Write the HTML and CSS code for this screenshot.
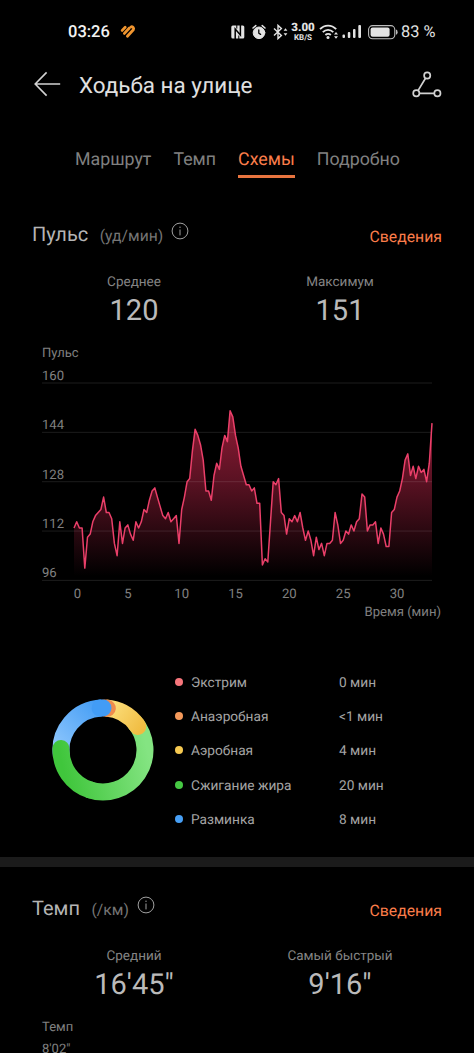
FILE: index.html
```html
<!DOCTYPE html>
<html lang="ru">
<head>
    <meta charset="UTF-8">
    <meta name="viewport" content="width=device-width, initial-scale=1.0">
    <title>Ходьба на улице</title>
    <link rel="stylesheet" href="styles.css">
</head>
<body>
    <div class="status-bar">
        <span class="clock">03:26</span>
        <svg class="heart" width="16" height="14" viewBox="0 0 16 14" fill="none" stroke="#f0952f" stroke-width="2.8" stroke-linecap="round">
            <path d="M2.2 5.4 L5.2 2.3"/>
            <path d="M4.4 8.4 L9.4 3"/>
            <path d="M7.4 11.2 L13.4 4.6 C14.3 2.8 12.6 1.6 11.2 1.8"/>
        </svg>
        <div class="status-icons">
            <svg width="14" height="14" viewBox="0 0 14 14">
                <rect x="0.3" y="0.5" width="13" height="13" rx="1.5" fill="#e3e3e3"/>
                <path d="M4.2 14 V4 L9.4 10 V0" fill="none" stroke="#000" stroke-width="1.5"/>
                <path d="M5.8 0 V3.6 M7.8 14 V10.5" stroke="#000" stroke-width="1"/>
            </svg>
            <svg class="alarm" width="14" height="16" viewBox="0 0 14 16" fill="none" stroke="#e3e3e3" stroke-linecap="round">
                <circle cx="7" cy="8.8" r="5.8" fill="#e3e3e3"/>
                <path d="M1 4 L3.8 1.6 M13 4 L10.2 1.6" stroke-width="1.5"/>
                <path d="M6.8 6 V9.2 L8.6 10.4" stroke="#000" stroke-width="1.3"/>
            </svg>
            <svg class="bluetooth" width="15" height="16" viewBox="0 0 15 16" fill="none" stroke="#e3e3e3" stroke-width="1.4">
                <path d="M1 4.6 L8.4 11.4 L5 14.6 V1.4 L8.4 4.6 L1 11.4"/>
                <path d="M12.5 4.2 L14.4 6.7 H10.6 Z M12.5 11.8 L14.4 9.3 H10.6 Z" fill="#e3e3e3" stroke="none"/>
            </svg>
            <div class="speed"><b>3.00</b><span>KB/S</span></div>
            <svg class="wifi" width="20" height="16" viewBox="0 0 20 16" fill="none" stroke="#e3e3e3" stroke-width="1.8">
                <path d="M1 5.2 C5.5 .3 12.6 .3 17.2 5.2"/>
                <path d="M3.8 8.2 C6.8 5 11.3 5 14.3 8.2"/>
                <path d="M6.4 11 C8 9.4 10.2 9.4 11.8 11"/>
                <circle cx="9" cy="13.4" r="1.5" fill="#e3e3e3" stroke="none"/>
                <path d="M17 8 L19 10.6 H15 Z M17 14.8 L19 12.2 H15 Z" fill="#e3e3e3" stroke="none"/>
            </svg>
            <svg class="signal" width="20" height="14" viewBox="0 0 20 14" fill="#e3e3e3">
                <rect x="0.5" y="9.5" width="2.5" height="3.5" rx="1"/>
                <rect x="5.8" y="7" width="2.5" height="6" rx="1"/>
                <rect x="11" y="4" width="2.5" height="9" rx="1"/>
                <rect x="16.3" y="0" width="2.7" height="13" rx="1"/>
            </svg>
            <svg class="battery" width="30" height="15" viewBox="0 0 30 15">
                <rect x="0.6" y="0.6" width="26.2" height="13.2" rx="4" fill="none" stroke="#bdbdbd" stroke-width="1.1"/>
                <rect x="2.6" y="2.6" width="19" height="9.2" rx="2" fill="#e3e3e3"/>
                <path d="M28 4.6 Q29.6 5 29.6 7.2 Q29.6 9.4 28 9.8 Z" fill="#bdbdbd"/>
            </svg>
            <span class="percent">83 %</span>
        </div>
    </div>

    <header class="header">
        <svg width="28" height="26" viewBox="0 0 28 26" fill="none" stroke="#d2d2d2" stroke-width="1.6">
            <path d="M13.6 1.4 L2.2 13 L13.6 24.6 M2.2 13 H27.2"/>
        </svg>
        <h1 class="title">Ходьба на улице</h1>
        <svg class="track" width="30" height="27" viewBox="0 0 30 27" fill="none" stroke="#d2d2d2" stroke-width="1.7">
            <circle cx="15.2" cy="4.5" r="3.1"/>
            <circle cx="4.3" cy="22.3" r="3.1"/>
            <circle cx="25.4" cy="22.3" r="3.1"/>
            <path d="M13.5 7.2 L6 19.6 M7.4 22.3 H22.3"/>
        </svg>
    </header>

    <nav class="tabs">
        <span class="tab">Маршрут</span>
        <span class="tab">Темп</span>
        <span class="tab active">Схемы</span>
        <span class="tab">Подробно</span>
    </nav>

    <section class="card pulse">
        <div class="card-head">
            <h2>Пульс</h2>
            <span class="unit">(уд/мин)</span>
            <svg class="info" width="18" height="18" viewBox="0 0 18 18" fill="none" stroke="#a0a0a0">
                <circle cx="9" cy="9" r="7.9"/>
                <path d="M9 7.5 V13.4 M9 4.6 V6"/>
            </svg>
            <span class="details">Сведения</span>
        </div>
        <div class="stats">
            <div class="stat"><span>Среднее</span><strong>120</strong></div>
            <div class="stat"><span>Максимум</span><strong>151</strong></div>
        </div>
        <div class="chart-name">Пульс</div>
        <svg class="chart" width="400" height="252" viewBox="42 368 400 252">
            <defs>
                <linearGradient id="pulseFill" gradientUnits="userSpaceOnUse" x1="0" y1="383" x2="0" y2="576">
                    <stop offset="0" stop-color="#a51f3d"/>
                    <stop offset="0.5" stop-color="#5b1223"/>
                    <stop offset="1" stop-color="#000"/>
                </linearGradient>
            </defs>
            <path id="pulseArea" fill="url(#pulseFill)"/>
            <g id="pulseGrid"></g>
            <path id="pulseLine" class="pulse-line"/>
            <text class="axis-text" x="441" y="615.5" text-anchor="end">Время (мин)</text>
        </svg>
        <div class="zones">
            <svg class="donut" width="102" height="102" viewBox="-51 -51 102 102" fill="none" stroke-width="17">
                <defs>
                    <linearGradient id="warm" gradientUnits="userSpaceOnUse" x1="-42" y1="0" x2="2" y2="-42">
                        <stop offset="0" stop-color="#8ac4fc"/>
                        <stop offset="1" stop-color="#429cf5"/>
                    </linearGradient>
                    <linearGradient id="fat" gradientUnits="userSpaceOnUse" x1="42" y1="-10" x2="-42" y2="10">
                        <stop offset="0" stop-color="#84e482"/>
                        <stop offset="1" stop-color="#40c63c"/>
                    </linearGradient>
                    <linearGradient id="aero" gradientUnits="userSpaceOnUse" x1="8" y1="-42" x2="40" y2="-20">
                        <stop offset="0" stop-color="#fbdc78"/>
                        <stop offset="1" stop-color="#f0bb40"/>
                    </linearGradient>
                </defs>
                <g id="zoneArcs"></g>
            </svg>
            <ul class="legend">
                <li><i class="dot extreme"></i><span>Экстрим</span><span>0 мин</span></li>
                <li><i class="dot anaerobic"></i><span>Анаэробная</span><span>&lt;1 мин</span></li>
                <li><i class="dot aerobic"></i><span>Аэробная</span><span>4 мин</span></li>
                <li><i class="dot fat"></i><span>Сжигание жира</span><span>20 мин</span></li>
                <li><i class="dot warmup"></i><span>Разминка</span><span>8 мин</span></li>
            </ul>
        </div>
    </section>

    <section class="card pace">
        <div class="card-head">
            <h2>Темп</h2>
            <span class="unit">(/км)</span>
            <svg class="info" width="18" height="18" viewBox="0 0 18 18" fill="none" stroke="#a0a0a0">
                <circle cx="9" cy="9" r="7.9"/>
                <path d="M9 7.5 V13.4 M9 4.6 V6"/>
            </svg>
            <span class="details">Сведения</span>
        </div>
        <div class="stats">
            <div class="stat"><span>Средний</span><strong>16'45"</strong></div>
            <div class="stat"><span>Самый быстрый</span><strong>9'16"</strong></div>
        </div>
        <div class="chart-name">Темп</div>
        <div class="pace-top">8'02"</div>
    </section>

    <script src="script.js"></script>
</body>
</html>
```
FILE: styles.css
```css
* {
    box-sizing: border-box;
}

body {
    margin: 0;
    height: 1053px;
    overflow: hidden;
    background-color: #000;
    color: #b4b4b4;
    font-family: Roboto, "Liberation Sans", sans-serif;
    text-rendering: geometricPrecision;
}

svg {
    display: block;
    flex: none;
}

.status-bar {
    display: flex;
    align-items: center;
    height: 64px;
    padding-left: 68px;
    padding-right: 38px;
}

.clock {
    width: 52px;
    font-size: 16.5px;
    font-weight: 500;
    color: #f2f2f2;
}

.status-icons {
    display: flex;
    align-items: center;
    margin-left: auto;
    color: #e3e3e3;
}

.alarm { margin-left: 7px; }
.bluetooth { margin-left: 7px; }

.speed {
    display: flex;
    flex-direction: column;
    align-items: center;
    width: 24px;
    margin-left: 3px;
    font-size: 8px;
    line-height: 9px;
    font-weight: 700;
}

.speed b {
    font-size: 11.5px;
    line-height: 11px;
}

.wifi { margin-left: 4px; }
.signal { margin-left: 3px; }
.battery { margin-left: 6px; }

.percent {
    width: 35px;
    margin-left: 3px;
    font-size: 16.4px;
    white-space: nowrap;
}

.header {
    display: flex;
    align-items: center;
    height: 40px;
    padding: 0 32px 0 33px;
}

.title {
    margin: 3px 0 0 18px;
    font-size: 22.4px;
    font-weight: 400;
    color: #e0e0e0;
}

.track { margin-left: auto; }

.tabs {
    display: flex;
    gap: 22px;
    height: 76px;
    padding: 42px 0 0 75px;
}

.tab {
    height: 32px;
    font-size: 17.8px;
    line-height: 27px;
    color: #808080;
}

.tab.active {
    color: #fb7d4a;
    border-bottom: 3px solid #e8743f;
}

.card-head {
    display: flex;
    height: 40px;
    padding: 0 32px;
    line-height: 30px;
}

.card-head h2 {
    margin: 0;
    font-size: 20px;
    font-weight: 400;
}

.unit {
    margin: 2px 0 0 11.5px;
    font-size: 15.7px;
    color: #757575;
}

.info { margin: 3px 0 0 8px; }

.details {
    margin: 3px 0 0 auto;
    font-size: 15.8px;
    color: #fb7d4a;
}

.pulse {
    height: 677px;
    padding-top: 39px;
}

.stats {
    display: grid;
    grid-template-columns: 206px 206px;
    padding-left: 31px;
    height: 81px;
    padding-top: 13px;
}

.stat {
    display: flex;
    flex-direction: column;
    align-items: center;
}

.stat span {
    font-size: 13.5px;
    line-height: 20px;
    color: #858585;
}

.stat strong {
    margin-top: 1px;
    font-size: 29px;
    line-height: 36px;
    font-weight: 400;
    color: #bababa;
}

.chart-name {
    padding-left: 42px;
    font-size: 13px;
    line-height: 20px;
    margin-top: 4px;
    color: #808080;
}

.chart {
    margin: 4px 0 0 42px;
}

.pulse-line {
    fill: none;
    stroke: #ea3f69;
    stroke-width: 1.5;
    stroke-linejoin: round;
}

.grid-line {
    stroke: #fff;
    stroke-opacity: 0.11;
}

.axis-text {
    font-size: 13.1px;
    fill: #808080;
}

.zones {
    display: flex;
    align-items: center;
    padding: 0 0 0 52px;
    margin-top: 45px;
}

.legend {
    margin: 0 0 0 21px;
    padding: 0;
    list-style: none;
}

.legend li {
    display: grid;
    grid-template-columns: 16px 148px 80px;
    align-items: center;
    height: 34.2px;
    font-size: 13.7px;
    color: #a5a5a5;
}

.legend span { padding-top: 2px; }

.dot {
    width: 8px;
    height: 8px;
    border-radius: 50%;
}

.extreme { background-color: #f7767c; }
.anaerobic { background-color: #f4995a; }
.aerobic { background-color: #f6c951; }
.fat { background-color: #46c843; }
.warmup { background-color: #479ff5; }

.pace {
    border-top: 10px solid #1b1b1b;
    padding-top: 26px;
}

.pace-top {
    padding-left: 42px;
    font-size: 13px;
    line-height: 24px;
    color: #808080;
}
```
FILE: script.js
```js
// heart rate, one sample every 15 seconds
const pulse = [
    113, 115, 113, 113, 100, 110, 111, 115, 117, 118, 119, 123, 118, 118, 116, 108, 104, 115, 108, 113,
    114, 111, 109, 115, 113, 115, 119, 118, 122, 125, 126, 123, 120, 117, 116, 118, 115, 116, 117, 108,
    119, 123, 128, 129, 138, 145, 143, 140, 135, 125, 125, 122, 130, 134, 132, 139, 143, 141, 151, 149,
    143, 139, 133, 130, 127, 127, 125, 126, 121, 121, 101, 103, 102, 115, 128, 127, 129, 118, 117, 111,
    116, 115, 117, 115, 118, 113, 109, 112, 109, 104, 110, 106, 108, 104, 108, 108, 109, 118, 114, 108,
    109, 112, 111, 114, 112, 115, 116, 124, 123, 112, 114, 114, 115, 108, 113, 111, 107, 107, 118, 119,
    123, 125, 129, 135, 137, 130, 133, 129, 133, 131, 132, 128, 134, 147
];

const left = 74;
const right = 432;
const top160 = 383;
const bottom96 = 580.4;

const yOf = bpm => bottom96 - (bpm - 96) * (bottom96 - top160) / 64;
const step = (right - left) / (pulse.length - 1);
const line = pulse.map((bpm, i) => `${(left + i * step).toFixed(1)} ${yOf(bpm).toFixed(1)}`).join(" L");

document.getElementById("pulseLine").setAttribute("d", "M" + line);
document.getElementById("pulseArea").setAttribute("d", `M${left} ${bottom96} L${line} L${right} ${bottom96} Z`);

let grid = "";
[160, 144, 128, 112, 96].forEach(bpm => {
    const y = yOf(bpm);
    grid += `<line class="grid-line" x1="42" x2="432" y1="${y}" y2="${y}"/>`;
    grid += `<text class="axis-text" x="42" y="${y - 3}">${bpm}</text>`;
});
[0, 5, 10, 15, 20, 25, 30].forEach(min => {
    const x = left + min * step * 4 + (min === 0 ? 3.5 : 0);
    grid += `<text class="axis-text" x="${x}" y="598" text-anchor="middle">${min}</text>`;
});
document.getElementById("pulseGrid").innerHTML = grid;

// zone ring, angles in degrees clockwise from 12 o'clock
function arc(from, to, color, cap) {
    const p = a => `${42 * Math.sin(a * Math.PI / 180)} ${-42 * Math.cos(a * Math.PI / 180)}`;
    const large = to - from > 180 ? 1 : 0;
    return `<path d="M${p(from)} A42 42 0 ${large} 1 ${p(to)}" stroke="${color}" stroke-linecap="${cap}"/>`;
}

document.getElementById("zoneArcs").innerHTML =
    arc(48, 200, "url(#fat)", "butt") +
    arc(4, 54, "url(#aero)", "butt") +
    arc(53, 56, "url(#aero)", "round") +
    arc(2, 6, "#ee8b4d", "round") +
    arc(262, 358, "url(#warm)", "butt") +
    arc(356, 360, "#429cf5", "round") +
    arc(198, 272, "url(#fat)", "round");
```
